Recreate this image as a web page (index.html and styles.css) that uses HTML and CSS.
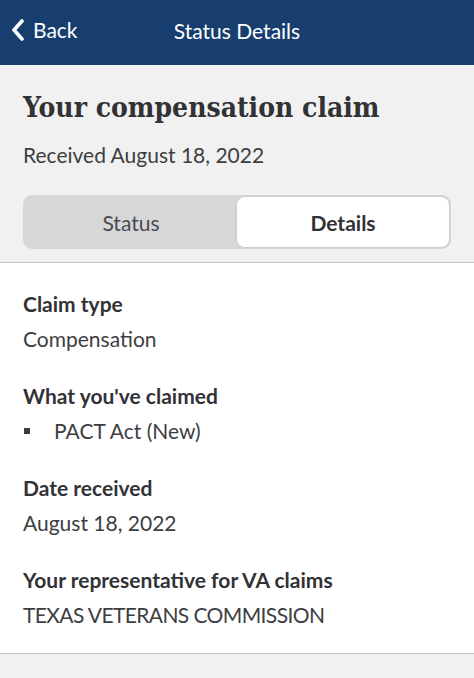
FILE: index.html
```html
<!DOCTYPE html>
<html>

<head>
  <meta charset="utf-8">
  <meta name="viewport" content="width=device-width">
  <title>Status Details</title>
  <link rel="stylesheet" href="styles.css">
</head>

<body>
  <div class="topBar">
    <a class="back" href="#">
      <svg width="14" height="22" viewBox="0 0 14 22"><path d="M11 2 L3 11 L11 20" fill="none" stroke="#fff" stroke-width="3.6" stroke-linecap="round" stroke-linejoin="round"/></svg>
      Back
    </a>
    <div class="topTitle">Status Details</div>
  </div>

  <div class="summary">
    <h1>Your compensation claim</h1>
    <div class="received">Received August 18, 2022</div>
    <div class="segments">
      <div class="segment">Status</div>
      <div class="segment selected">Details</div>
    </div>
  </div>

  <div class="details">
    <div class="field">
      <div class="label">Claim type</div>
      <div class="value">Compensation</div>
    </div>
    <div class="field">
      <div class="label">What you've claimed</div>
      <ul class="claimed">
        <li>PACT Act (New)</li>
      </ul>
    </div>
    <div class="field">
      <div class="label">Date received</div>
      <div class="value">August 18, 2022</div>
    </div>
    <div class="field">
      <div class="label">Your representative for VA claims</div>
      <div class="value caps">TEXAS VETERANS COMMISSION</div>
    </div>
  </div>

  <div class="footer"></div>
</body>
</html>
```

FILE: styles.css
```css
html {
  background-color: #f1f1f1;
}

body {
  margin: 0;
  padding: 0;
  font-family: Lato, "Source Sans Pro", sans-serif;
  color: #3d3e42;
}

.topBar {
  height: 65px;
  box-sizing: border-box;
  padding-bottom: 5px;
  background-color: #183d6f;
  color: #ffffff;
  display: flex;
  align-items: center;
  justify-content: center;
  position: relative;
  font-size: 21px;
}

.back {
  position: absolute;
  left: 11px;
  top: 17px;
  display: flex;
  align-items: center;
  gap: 8px;
  color: #ffffff;
  text-decoration: none;
}

.topTitle {
  text-align: center;
}

.summary {
  padding: 22px 23px 13px;
  background-color: #f1f1f1;
  border-bottom: 1px solid #c4c4c4;
}

h1 {
  margin: 0;
  font-family: "DejaVu Serif Condensed", "DejaVu Serif", serif;
  font-size: 28px;
  font-weight: bold;
  line-height: 42px;
  color: #323236;
}

.received {
  font-size: 21px;
  line-height: 30px;
  margin-top: 11px;
}

.segments {
  margin-top: 25px;
  height: 54px;
  display: flex;
  padding: 2px;
  box-sizing: border-box;
  background-color: #d6d7d9;
  border-radius: 9px;
}

.segment {
  flex: 1;
  display: flex;
  align-items: center;
  justify-content: center;
  font-size: 21px;
  border-radius: 8px;
  color: #4a4b50;
}

.segment.selected {
  background-color: #ffffff;
  font-weight: bold;
  color: #323236;
  box-shadow: 0 0 2px rgba(0, 0, 0, 0.15);
}

.details {
  background-color: #ffffff;
  padding: 23px 23px 21px;
  border-bottom: 1px solid #c4c4c4;
  display: flex;
  flex-direction: column;
  gap: 22px;
}

.label {
  font-size: 21px;
  font-weight: bold;
  line-height: 35px;
  color: #323236;
}

.value {
  font-size: 21px;
  line-height: 35px;
}

.value.caps {
  letter-spacing: -0.6px;
}

.claimed {
  margin: 0;
  padding: 0;
  list-style: none;
}

.claimed li {
  font-size: 21px;
  line-height: 35px;
  padding-left: 31px;
  position: relative;
}

.claimed li::before {
  content: "";
  position: absolute;
  left: 1px;
  top: 15px;
  width: 6px;
  height: 6px;
  background-color: #3d3e42;
}

.footer {
  height: 30px;
}
```
